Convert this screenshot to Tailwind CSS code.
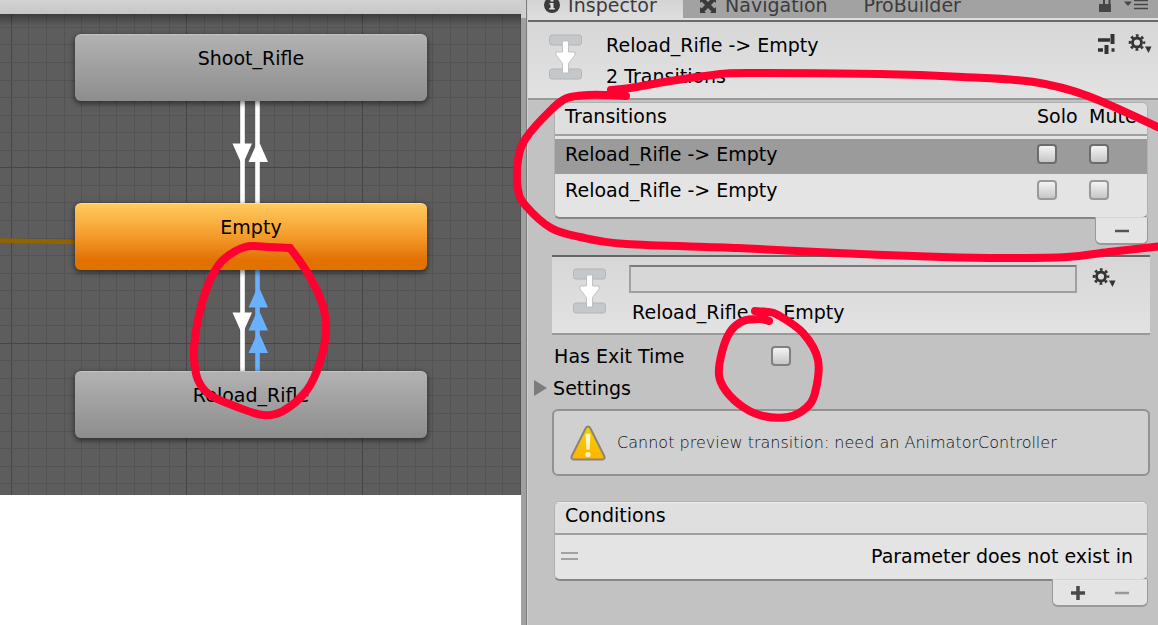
<!DOCTYPE html>
<html lang="en">

<head>
  <meta charset="UTF-8">
  <meta name="viewport" content="width=device-width, initial-scale=1.0">
  <title>Animator - Inspector</title>
  <script src="https://cdn.jsdelivr.net/npm/@tailwindcss/browser@4"></script>
</head>

<body class="relative flex min-h-screen overflow-x-hidden bg-white font-['DejaVu_Sans',sans-serif] text-[19px] leading-6 text-black">

  <!-- Animator graph -->
  <section class="w-[45%] shrink-0">
    <div class="h-[14px] bg-linear-to-b from-[#d4d4d4] to-[#c6c6c6]"></div>
    <div class="relative h-[481px] overflow-hidden bg-[#5d5d5d]">
      <svg id="grid" class="absolute inset-0 h-full w-full" shape-rendering="crispEdges"></svg>
      <div class="absolute inset-x-0 top-0 h-3 bg-linear-to-b from-black/35 to-transparent"></div>

      <svg class="absolute left-0 top-0" width="521" height="481" fill="none">
        <path d="M0 226.500 L76 228" stroke="#946300" stroke-width="4.500" />
        <path d="M242.500 86V190M257.500 86V190M242.500 255V358" stroke="#fff" stroke-width="4.600" />
        <path d="M257.500 255V358" stroke="#69b0ff" stroke-width="4.600" />
        <path d="M232.500 129.500h19.500l-8 18h-3.500zM248.500 148h19.500l-8-18h-3.500zM232.500 298.500h19.500l-8 18h-3.500z" fill="#fff" />
        <path d="M248.500 293.500h19.500l-8-18h-3.500zM248.500 316.500h19.500l-8-18h-3.500zM248.500 339h19.500l-8-18h-3.500z" fill="#69b0ff" />
      </svg>

      <div class="absolute left-[75px] top-5 h-[67px] w-[352px] rounded-md border-t border-[#c4c4c4] bg-linear-to-b from-[#b2b2b2] to-[#8d8d8d] pt-[11px] text-center shadow-[0_2px_5px_1px_rgba(0,0,0,0.45)]">Shoot_Rifle</div>
      <div class="absolute left-[75px] top-[189px] h-[67px] w-[352px] rounded-md border-t border-[#ffe0a0] bg-linear-to-b from-[#ffca5c] via-[#f39a28] to-[#e27100] to-85% pt-[11px] text-center shadow-[0_2px_5px_1px_rgba(0,0,0,0.45)]">Empty</div>
      <div class="absolute left-[75px] top-[357px] h-[67px] w-[352px] rounded-md border-t border-[#c4c4c4] bg-linear-to-b from-[#b2b2b2] to-[#8d8d8d] pt-[11px] text-center shadow-[0_2px_5px_1px_rgba(0,0,0,0.45)]">Reload_Rifle</div>
    </div>
  </section>

  <!-- Splitter -->
  <div class="w-[6px] shrink-0 border-r border-[#7d7d7d] bg-[linear-gradient(#cfcfcf_18px,#a0a0a0_18px)]"></div>

  <!-- Inspector -->
  <main class="min-w-0 flex-1 border-l border-[#d2d2d2] bg-[#c2c2c2]">

    <div class="flex h-5 items-end overflow-hidden border-b-2 border-[#dedede] bg-[#a2a2a2] text-[#3c3c3c]">
      <button class="flex h-[26px] w-[155px] shrink-0 items-center gap-2 bg-linear-to-b from-[#cfcfcf] to-[#dedede] pl-4">
        <svg class="h-4 w-4" viewBox="0 0 16 16">
          <circle cx="8" cy="8" r="8" fill="#3a3a3a" />
          <path d="M6.500 2.500h3v2h-3zM5.500 6h4v5h1.200v1.500H5.300V11h1.200V7.500h-1z" fill="#ddd" />
        </svg>
        Inspector
      </button>
      <button class="flex h-[26px] shrink-0 items-center gap-2 pl-4">
        <svg class="h-[18px] w-[18px]" viewBox="0 0 18 18">
          <path d="M1 1h6L5.500 2.500 9 6l3.500-3.500L11 1h6v6l-1.500-1.500L12 9l3.500 3.500L17 11v6h-6l1.500-1.500L9 12l-3.500 3.500L7 17H1v-6l1.500 1.500L6 9 2.500 5.500 1 7z" fill="#3a3a3a" />
        </svg>
        Navigation
      </button>
      <button class="flex h-[26px] shrink-0 items-center pl-9">ProBuilder</button>
      <div class="ml-auto flex h-[26px] items-center gap-3 pb-1 pr-[10px]">
        <svg class="h-5 w-[14px]" viewBox="0 0 14 20">
          <path d="M6 11V6a3 3 0 0 1 5.500 0v5" fill="none" stroke="#464646" stroke-width="2" />
          <path d="M1 11h12v8H1z" fill="#464646" />
        </svg>
        <svg class="h-4 w-6" viewBox="0 0 24 16">
          <path d="M0 6.500h8L4 11z" fill="#464646" />
          <path d="M10 5.500h14M10 9.500h14M10 13.500h14" stroke="#464646" stroke-width="1.600" />
        </svg>
      </div>
    </div>

    <header class="flex h-20 items-start border-y-2 border-t-[#6a6a6a] border-b-[#999] bg-linear-to-b from-[#d7d7d7] to-[#e2e2e2] pl-5 pr-[6px] pt-[11px]">
      <svg class="h-12 w-9 shrink-0" viewBox="0 0 36 48">
        <rect x="1.500" y="2" width="32" height="10" rx="2.500" fill="#c5c8ca" stroke="#b2b5b6" />
        <rect x="1.500" y="36" width="32" height="10" rx="2.500" fill="#c5c8ca" stroke="#b2b5b6" />
        <path d="M14.500 8h6v11h6.500v3l-6.500 8.500V40h-6v-9.500L8 22v-3h6.500z" fill="#fff" stroke="#b6b6b6" stroke-width=".8" />
      </svg>
      <div class="min-w-0 flex-1 pl-[22px]">
        <h1>Reload_Rifle -&gt; Empty</h1>
        <p class="mt-[7px]">2 Transitions</p>
      </div>
      <div class="flex gap-3">
        <button aria-label="Presets">
          <svg class="h-[22px] w-5" viewBox="0 0 20 22" fill="none" stroke="#333">
            <path d="M2 7h12M2 17h5M15.500 17h3" stroke-width="3.500" />
            <path d="M16.500 1v10M10.500 12v9" stroke-width="4" />
          </svg>
        </button>
        <button aria-label="Transition options">
          <svg class="h-[22px] w-6" viewBox="0 0 24 22">
            <circle cx="9" cy="9.500" r="4.500" fill="none" stroke="#333" stroke-width="2.800" />
            <circle cx="9" cy="9.500" r="7" fill="none" stroke="#333" stroke-width="2.600" stroke-dasharray="2.750 2.750" stroke-dashoffset="1.375" />
            <path d="M17 13.500h6.500L20.500 20z" fill="#333" />
          </svg>
        </button>
      </div>
    </header>

    <div class="pb-5 pl-6 pr-2">

      <!-- Transition list -->
      <section class="mx-[2px] mt-[2px]">
        <div class="h-[117px] overflow-hidden rounded-md border border-b-2 border-[#b0b0b0] border-b-[#858585] bg-[#e4e4e4]">
          <table class="w-full table-fixed border-separate border-spacing-0 text-left">
            <thead>
              <tr class="h-[33px] bg-[#dfdfdf]">
                <th class="border-b-2 border-[#a0a0a0] p-0 pb-[6px] pl-[10px] font-normal">Transitions</th>
                <th class="w-[52px] border-b-2 border-[#a0a0a0] p-0 pb-[6px] font-normal">Solo</th>
                <th class="w-[58px] border-b-2 border-[#a0a0a0] p-0 pb-[6px] font-normal">Mute</th>
              </tr>
            </thead>
            <tbody>
              <tr class="h-[38px]">
                <td class="border-t-[3px] border-[#e4e4e4] bg-[#9b9b9b] p-0 pb-[6px] pl-[10px]">Reload_Rifle -&gt; Empty</td>
                <td class="border-t-[3px] border-[#e4e4e4] bg-[#9b9b9b] p-0 pb-[6px]"><input type="checkbox" aria-label="Solo" class="block size-5 appearance-none rounded-[4px] border-2 border-[#6c6c6c] bg-linear-to-b from-[#f4f4f4] to-[#c6c6c6]"></td>
                <td class="border-t-[3px] border-[#e4e4e4] bg-[#9b9b9b] p-0 pb-[6px]"><input type="checkbox" aria-label="Mute" class="block size-5 appearance-none rounded-[4px] border-2 border-[#6c6c6c] bg-linear-to-b from-[#f4f4f4] to-[#c6c6c6]"></td>
              </tr>
              <tr class="h-9">
                <td class="p-0 pb-1 pl-[10px]">Reload_Rifle -&gt; Empty</td>
                <td class="p-0 pb-1"><input type="checkbox" aria-label="Solo" class="block size-5 appearance-none rounded-[4px] border-2 border-[#999] bg-linear-to-b from-[#f4f4f4] to-[#c6c6c6]"></td>
                <td class="p-0 pb-1"><input type="checkbox" aria-label="Mute" class="block size-5 appearance-none rounded-[4px] border-2 border-[#999] bg-linear-to-b from-[#f4f4f4] to-[#c6c6c6]"></td>
              </tr>
            </tbody>
          </table>
        </div>
        <div class="flex justify-end">
          <div class="relative -mt-[2px] flex h-7 w-[53px] items-center justify-center rounded-b-md border border-b-2 border-t-[#d4d4d4] border-[#999] bg-[#e4e4e4]">
            <button aria-label="Remove transition" class="flex h-6 w-10 items-center justify-center">
              <svg class="h-[14px] w-[14px]" viewBox="0 0 14 14"><path d="M0 7h14" stroke="#555" stroke-width="2.500" /></svg>
            </button>
          </div>
        </div>
      </section>

      <!-- Selected transition -->
      <section class="mt-[10px] flex h-20 border-y-2 border-t-[#656565] border-b-[#999] bg-linear-to-b from-[#d7d7d7] to-[#e2e2e2] pl-5 pr-[34px]">
        <svg class="mt-[10px] h-12 w-9 shrink-0" viewBox="0 0 36 48">
          <rect x="1.500" y="2" width="32" height="10" rx="2.500" fill="#c5c8ca" stroke="#b2b5b6" />
          <rect x="1.500" y="36" width="32" height="10" rx="2.500" fill="#c5c8ca" stroke="#b2b5b6" />
          <path d="M14.500 8h6v11h6.500v3l-6.500 8.500V40h-6v-9.500L8 22v-3h6.500z" fill="#fff" stroke="#b6b6b6" stroke-width=".8" />
        </svg>
        <div class="min-w-0 flex-1 pl-[21px] pt-2">
          <input type="text" aria-label="Transition name" class="block h-7 w-full border-2 border-[#a0a0a0] border-t-[#7c7c7c] bg-[#d7d7d7] px-2 outline-none">
          <p class="pl-[3px] pt-[7px]">Reload_Rifle -&gt; Empty</p>
        </div>
        <button aria-label="Selected transition options" class="ml-[15px] mt-[10px] self-start">
          <svg class="h-[22px] w-6" viewBox="0 0 24 22">
            <circle cx="9" cy="9.500" r="4.500" fill="none" stroke="#333" stroke-width="2.800" />
            <circle cx="9" cy="9.500" r="7" fill="none" stroke="#333" stroke-width="2.600" stroke-dasharray="2.750 2.750" stroke-dashoffset="1.375" />
            <path d="M17 13.500h6.500L20.500 20z" fill="#333" />
          </svg>
        </button>
      </section>

      <div class="mt-[9px] flex h-6 items-center">
        <label for="exit-time" class="w-[219px] pl-[2px]">Has Exit Time</label>
        <input id="exit-time" type="checkbox" class="size-5 appearance-none rounded-[4px] border-2 border-[#808080] bg-linear-to-b from-[#f4f4f4] to-[#c6c6c6]">
      </div>

      <button class="-ml-[18px] mt-2 flex items-center gap-[6px]">
        <svg class="h-[18px] w-[13px]" viewBox="0 0 13 18"><path d="M0 1l13 8-13 8z" fill="#7c7c7c" /></svg>
        Settings
      </button>

      <div class="mt-[9px] flex h-[67px] items-center gap-[11px] rounded-md border-2 border-[#929292] bg-[#d0d0d0] pl-4">
        <svg class="h-9 w-9 shrink-0" viewBox="0 0 36 36">
          <defs>
            <linearGradient id="warn" x1="0" y1="0" x2="0" y2="1">
              <stop offset="0" stop-color="#f4d000" />
              <stop offset="1" stop-color="#ffb400" />
            </linearGradient>
          </defs>
          <path d="M18 1.500q1.500 0 2.300 1.700L34.300 31q1 3.500-2 3.500H3.700q-3 0-2-3.500L15.700 3.200Q16.500 1.500 18 1.500z" fill="url(#warn)" stroke="#89847a" stroke-width="2" />
          <path d="M15.500 9.500q2.500-2 5 0l-1 15h-3z" fill="#fff3c4" />
          <circle cx="18" cy="29.500" r="2.600" fill="#fff3c4" />
        </svg>
        <p class="text-base font-extralight text-[#111]">Cannot preview transition: need an AnimatorController</p>
      </div>

      <!-- Conditions -->
      <section class="mx-[2px] mt-[25px]">
        <div class="overflow-hidden rounded-md border border-b-2 border-[#b0b0b0] border-b-[#858585] bg-[#e4e4e4]">
          <h2 class="h-[33px] border-b-2 border-t border-t-[#ececec] border-b-[#a0a0a0] bg-[#dfdfdf] pl-[10px]">Conditions</h2>
          <div class="flex h-11 items-center justify-between pb-[2px] pl-[6px] pr-[14px]">
            <svg class="h-2 w-[17px]" viewBox="0 0 17 8"><path d="M0 1h17M0 7h17" stroke="#8a8a8a" stroke-width="1.500" /></svg>
            <span>Parameter does not exist in</span>
          </div>
        </div>
        <div class="flex justify-end">
          <div class="relative -mt-[2px] flex h-7 w-[96px] items-center justify-end rounded-b-md border border-b-2 border-t-[#d4d4d4] border-[#999] bg-[#e4e4e4] pr-[3px]">
            <button aria-label="Add condition" class="flex h-6 w-11 items-center justify-center">
              <svg class="h-[14px] w-[14px]" viewBox="0 0 14 14"><path d="M0 7h14M7 0v14" stroke="#484848" stroke-width="3.500" /></svg>
            </button>
            <button aria-label="Remove condition" class="flex h-6 w-11 items-center justify-center">
              <svg class="h-[14px] w-[14px]" viewBox="0 0 14 14"><path d="M0 7h14" stroke="#999" stroke-width="2.500" /></svg>
            </button>
          </div>
        </div>
      </section>
    </div>
  </main>

  <!-- Hand-drawn markers -->
  <svg id="markers" class="pointer-events-none absolute left-0 top-0" width="1158" height="625" fill="none" stroke="#ff0030" stroke-width="8" stroke-linecap="round" stroke-linejoin="round"></svg>

  <script>
    // Minor lines every tenth of a cell, major lines on the cell edges
    const grid = document.getElementById('grid');
    const step = 17.55;
    let lines = '';

    for (let i = 0; i < 120; i++) {
      const x = Math.round(10.9 + i * step);
      const color = i % 10 === 0 ? '#464646' : '#535353';
      lines += `<rect x="${x}" y="0" width="1" height="100%" fill="${color}" />`;
    }
    for (let i = 0; i < 28; i++) {
      const y = Math.round(12.9 + i * step);
      const color = i % 10 === 8 ? '#464646' : '#535353';
      lines += `<rect x="0" y="${y}" width="100%" height="1" fill="${color}" />`;
    }
    grid.innerHTML = lines;

    // Pen strokes, each a list of points joined by a smooth curve
    const strokes = [
      [[290, 248], [268, 247], [245, 247], [223, 260], [211, 278], [202, 303], [196, 330], [194, 357], [198, 380], [210, 395], [237, 407], [263, 415], [283, 411], [307, 390], [320, 362], [326, 330], [322, 303], [307, 272], [290, 248]],
      [[626, 96], [608, 95], [588, 95], [567, 98], [551, 110], [526, 138], [518, 160], [518, 190], [526, 206], [551, 228], [580, 237], [626, 244], [738, 248], [838, 253], [942, 257], [1005, 258], [1067, 257], [1109, 252], [1162, 246]],
      [[611, 90], [630, 88], [670, 81], [713, 75], [746, 73], [880, 74], [963, 77], [1034, 82], [1088, 96], [1162, 129]],
      [[769, 321], [760, 319], [743, 321], [730, 332], [722, 352], [719, 375], [726, 391], [743, 407], [763, 416], [788, 417], [806, 408], [815, 393], [818, 360], [803, 333], [778, 315], [768, 312], [755, 311]]
    ];

    function smooth(p) {
      let d = `M${p[0]}`;
      for (let i = 0; i < p.length - 1; i++) {
        const a = p[i - 1] || p[i], b = p[i], c = p[i + 1], e = p[i + 2] || c;
        d += `C${b[0] + (c[0] - a[0]) / 6} ${b[1] + (c[1] - a[1]) / 6} ${c[0] - (e[0] - b[0]) / 6} ${c[1] - (e[1] - b[1]) / 6} ${c}`;
      }
      return d;
    }
    document.getElementById('markers').innerHTML = strokes.map(p => `<path d="${smooth(p)}" />`).join('');
  </script>
</body>

</html>
